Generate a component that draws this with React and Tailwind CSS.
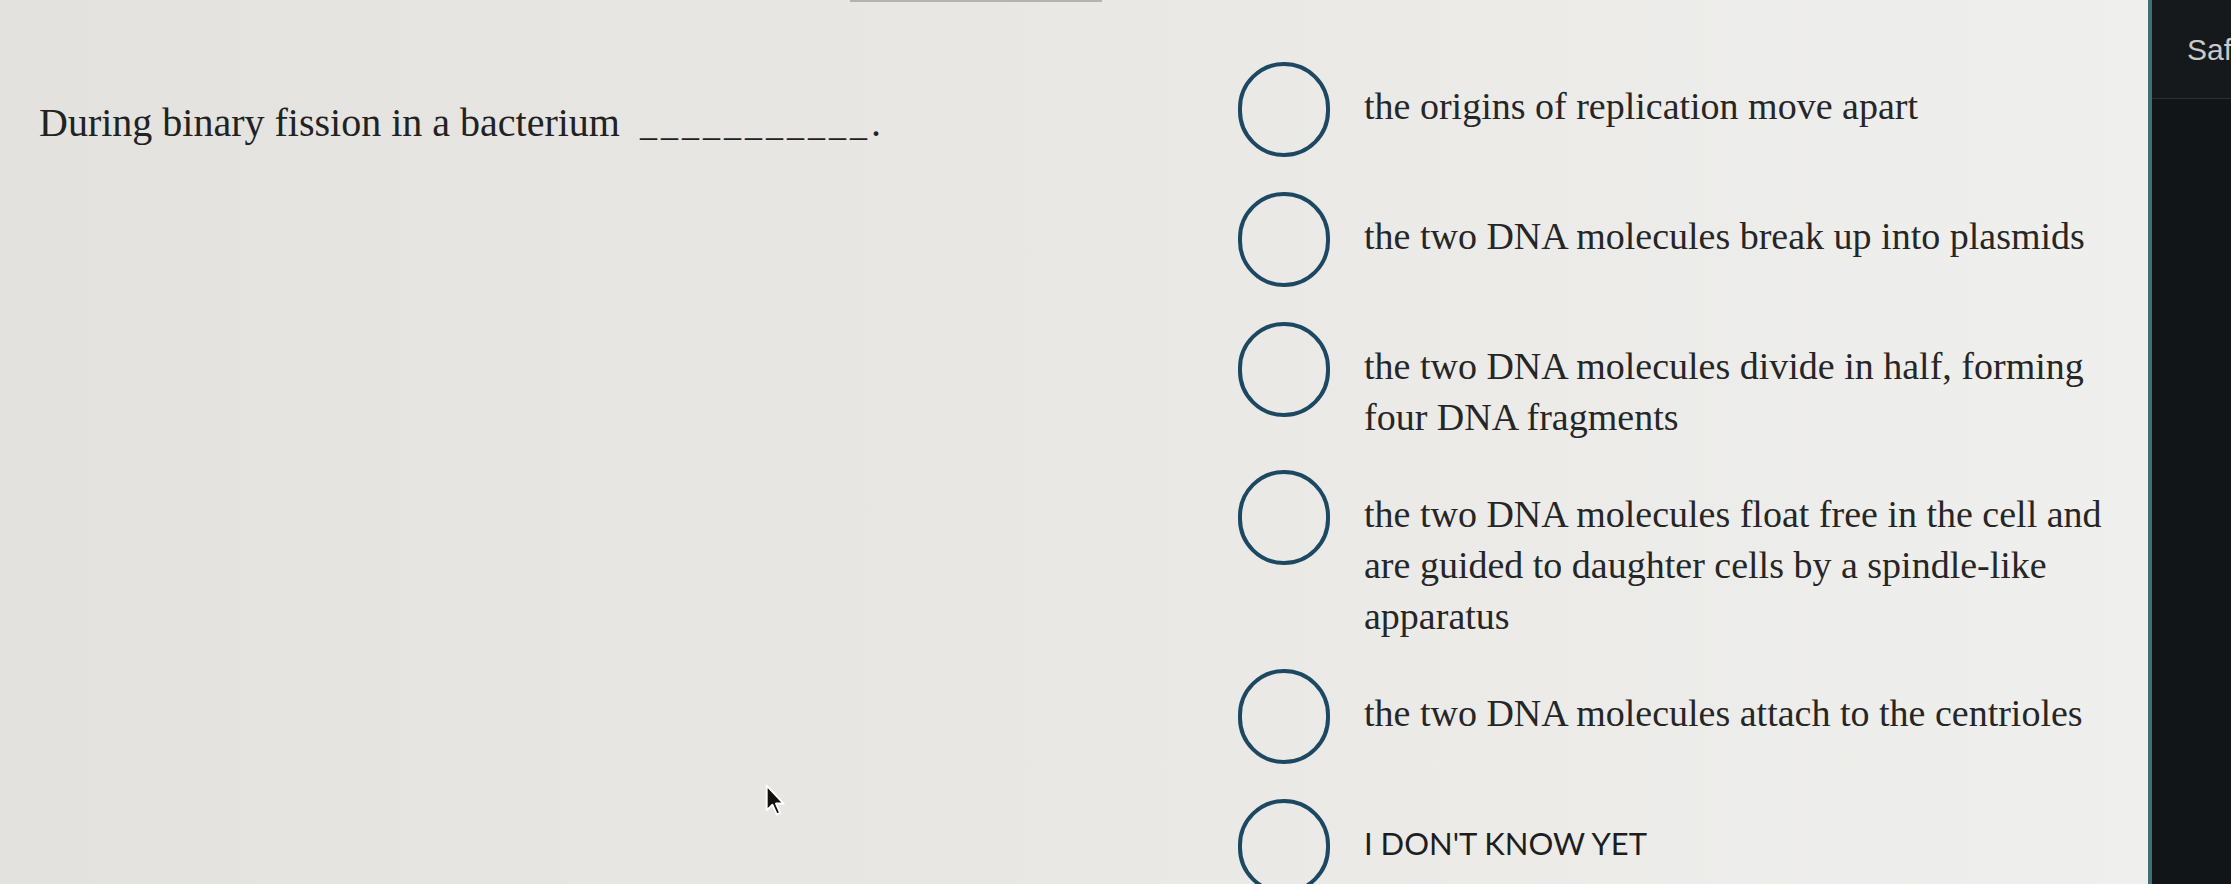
import React from "react";

const options = [
  { id: "a", text: "the origins of replication move apart" },
  { id: "b", text: "the two DNA molecules break up into plasmids" },
  { id: "c", text: "the two DNA molecules divide in half, forming four DNA fragments" },
  {
    id: "d",
    text: "the two DNA molecules float free in the cell and are guided to daughter cells by a spindle-like apparatus",
  },
  { id: "e", text: "the two DNA molecules attach to the centrioles" },
  { id: "f", text: "I DON'T KNOW YET", caps: true },
];

const Cursor = () => (
  <svg width="21" height="32" viewBox="0 0 13 20" className="absolute left-[765px] top-[784px]">
    <path
      d="M1 1 L1 16.5 L4.6 13 L7.3 19 L9.4 18.1 L6.8 12.2 L11.6 12.2 Z"
      fill="#111"
      stroke="#fff"
      strokeWidth="1.2"
      strokeLinejoin="round"
    />
  </svg>
);

const Option = ({ option }) => (
  <li className="flex items-start">
    <button
      type="button"
      aria-label={option.text}
      className="w-[92px] h-[95px] shrink-0 rounded-full border-[4px] border-[#1d4862] bg-transparent"
    />
    <span
      className={`ml-[34px] w-[760px] pt-[19px] mb-[-8px] leading-[51px] ${
        option.caps
          ? "text-[31px] text-[#1e1e1e] font-['Lato',sans-serif]"
          : "text-[38px] text-[#262626] font-['Liberation_Serif',serif]"
      }`}
    >
      {option.text}
    </span>
  </li>
);

export default function App() {
  return (
    <div className="relative flex h-[884px] w-full overflow-hidden bg-[#121719]">
      <main className="flex w-[2148px] shrink-0 bg-linear-to-r from-[#e3e2de] via-[#e9e8e5] to-[#efefed]">
        <section className="w-[1205px] shrink-0">
          <div className="ml-[850px] w-[252px] h-[2px] bg-[#b4b3af]" />
          <p className="pl-[39px] pt-[95px] text-[40px] leading-[51px] text-[#222] font-['Liberation_Serif',serif]">
            During binary fission in a bacterium
            <span className="ml-[20px] text-[34px] tracking-[4px]">___________</span>.
          </p>
        </section>

        <section className="flex-1 flex flex-col">
          <div className="mt-[6px] mr-[18px] h-[3px] bg-[#b1b0ac]" />
          <ul className="pl-[33px] mt-[56px] flex flex-col gap-[35px]">
            {options.map((o) => (
              <Option key={o.id} option={o} />
            ))}
          </ul>
        </section>
      </main>

      <div className="w-[4px] shrink-0 bg-[#3f6f73]" />

      <aside className="flex-1 flex flex-col overflow-hidden">
        <div className="h-[99px] border-b border-[#2b3133] bg-[#15191b] pl-[35px] pt-[32px]">
          <span className="block whitespace-nowrap text-[30px] leading-[36px] text-[#c9c9c9] font-['Liberation_Sans',sans-serif]">
            Safari
          </span>
        </div>
        <div className="flex-1 bg-[#111517]" />
      </aside>

      <Cursor />
    </div>
  );
}
